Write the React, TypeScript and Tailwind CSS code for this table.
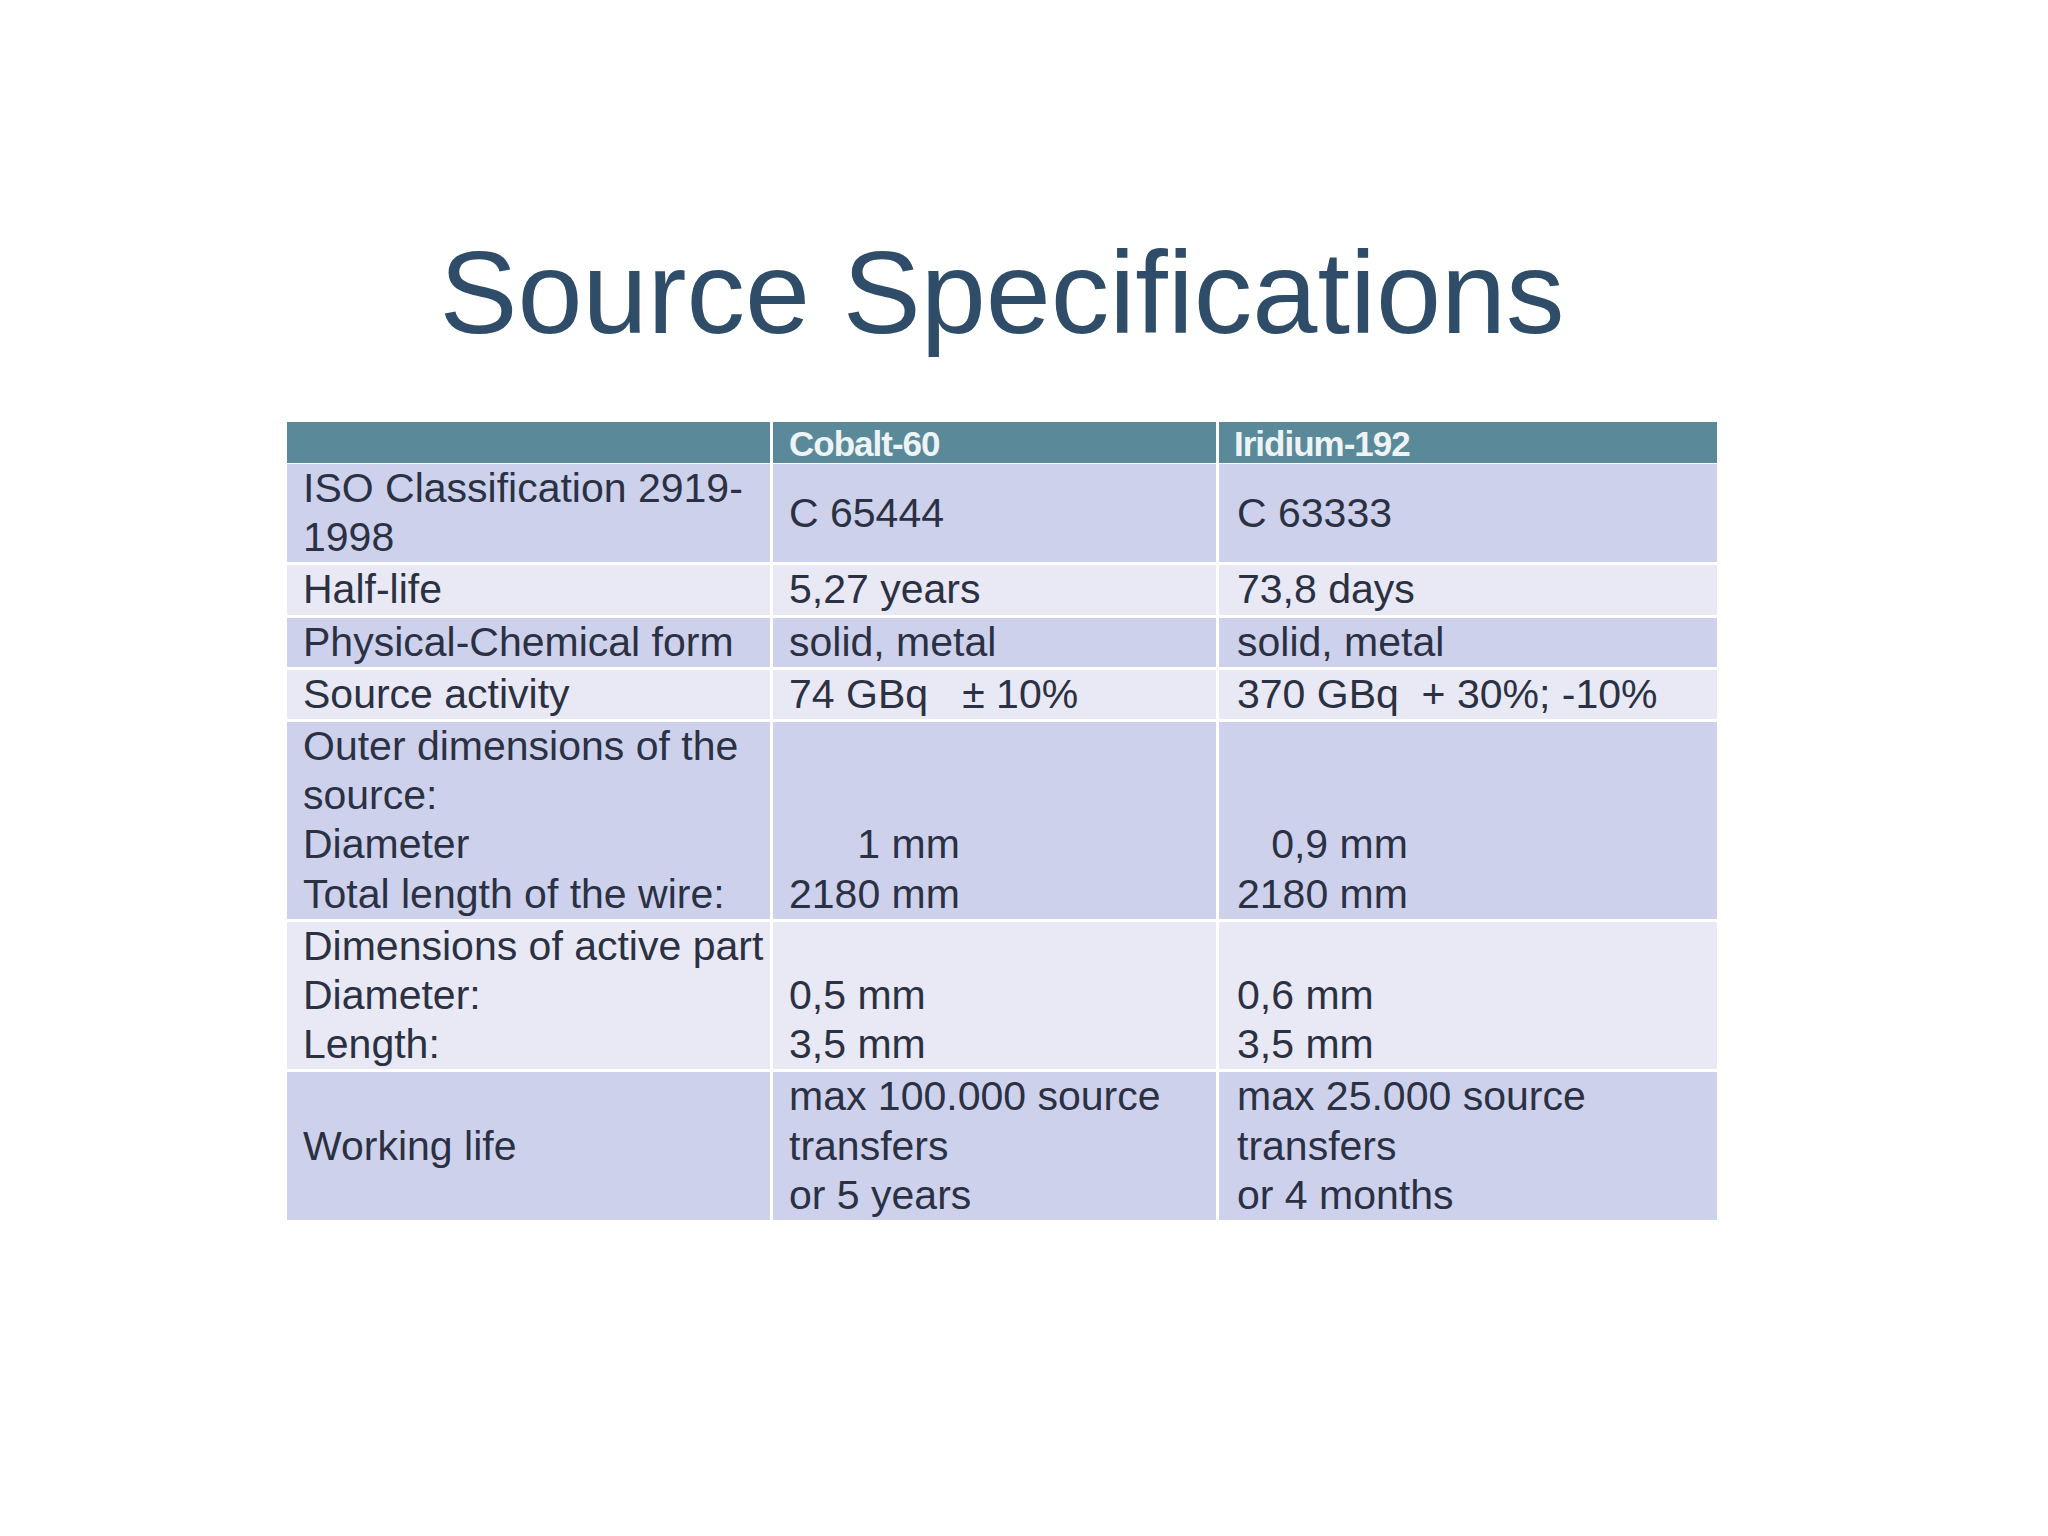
import React from "react";

type Row = {
  label: string[];
  a: string[];
  b: string[];
  tone: "dark" | "light";
  labelCenter?: boolean;
  valuesCenter?: boolean;
};

const rows: Row[] = [
  { label: ["ISO Classification 2919-", "1998"], a: ["C 65444"], b: ["C 63333"], tone: "dark", valuesCenter: true },
  { label: ["Half-life"], a: ["5,27 years"], b: ["73,8 days"], tone: "light" },
  { label: ["Physical-Chemical form"], a: ["solid, metal"], b: ["solid, metal"], tone: "dark" },
  { label: ["Source activity"], a: ["74 GBq\u00a0\u00a0\u00a0\u00b1 10%"], b: ["370 GBq\u00a0\u00a0+ 30%; -10%"], tone: "light" },
  {
    label: ["Outer dimensions of the", "source:", "Diameter", "Total length of the wire:"],
    a: ["\u00a0", "\u00a0", "\u00a0\u00a0\u00a0\u00a0\u00a0\u00a01 mm", "2180 mm"],
    b: ["\u00a0", "\u00a0", "\u00a0\u00a0\u00a00,9 mm", "2180 mm"],
    tone: "dark",
  },
  {
    label: ["Dimensions of active part", "Diameter:", "Length:"],
    a: ["\u00a0", "0,5 mm", "3,5 mm"],
    b: ["\u00a0", "0,6 mm", "3,5 mm"],
    tone: "light",
  },
  {
    label: ["Working life"],
    a: ["max 100.000 source", "transfers", "or 5 years"],
    b: ["max 25.000 source", "transfers", "or 4 months"],
    tone: "dark",
    labelCenter: true,
  },
];

function Cell({ lines, center, bg, pad }: { lines: string[]; center?: boolean; bg: string; pad: string }) {
  return (
    <div className={`${bg} ${pad} flex flex-col ${center ? "justify-center" : "justify-start"}`}>
      {lines.map((l, i) => (
        <div key={i} className="whitespace-pre">
          {l}
        </div>
      ))}
    </div>
  );
}

export default function App() {
  return (
    <div className="w-[2048px] h-[1536px] bg-white relative" style={{ fontFamily: '"Liberation Sans", Arial, sans-serif' }}>
      <div className="pt-[234px] pl-[287px]">
        <div className="w-[1430px]">
          <h1 className="text-center text-[117px] leading-[117px] text-[#2f4d68] font-normal">
            Source Specifications
          </h1>
          <div className="mt-[71px] flex flex-col gap-[3px] text-[41px] leading-[49.2px] text-[#2b3143]">
            <div className="grid grid-cols-[483px_443px_498px] gap-x-[3px] h-[39px] text-[35px] leading-[39px] font-bold text-[#eef4f6] tracking-[-1px]">
              <div className="bg-[#5a8a99]" />
              <div className="bg-[#5a8a99] pl-[16px] pt-[2px]">Cobalt-60</div>
              <div className="bg-[#5a8a99] pl-[15px] pt-[2px]">Iridium-192</div>
            </div>
            {rows.map((r, i) => {
              const bg = r.tone === "dark" ? "bg-[#cdd1ec]" : "bg-[#e8e9f4]";
              return (
                <div key={i} className="grid grid-cols-[483px_443px_498px] gap-x-[3px]">
                  <Cell lines={r.label} center={r.labelCenter} bg={bg} pad="pl-[16px]" />
                  <Cell lines={r.a} center={r.valuesCenter} bg={bg} pad="pl-[16px]" />
                  <Cell lines={r.b} center={r.valuesCenter} bg={bg} pad="pl-[18px]" />
                </div>
              );
            })}
          </div>
        </div>
      </div>
    </div>
  );
}
